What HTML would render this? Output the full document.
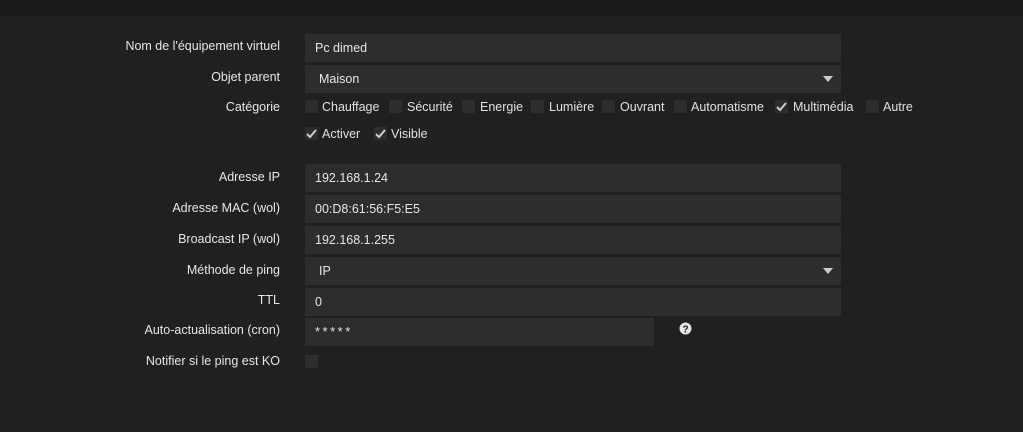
<!DOCTYPE html><html><head><style>
body{margin:0;width:1023px;height:432px;background:#202020;font-family:"Liberation Sans",sans-serif;font-size:12.5px;color:#ddd;position:relative;overflow:hidden}
.top{position:absolute;left:0;top:0;width:1023px;height:16px;background:#191919}
.l{position:absolute;right:743px;color:#e6e6e6;white-space:nowrap}
.i{position:absolute;left:305px;width:536px;height:28px;background:#2d2d2d;color:#e6e6e6;box-sizing:border-box;padding-left:10px;line-height:28px}
.cb{position:absolute;width:13px;height:13px;background:#2d2d2d}
.t{position:absolute;white-space:nowrap;color:#e0e0e0}
.ar{position:absolute;right:8px;top:11px;width:0;height:0;border-left:5px solid transparent;border-right:5px solid transparent;border-top:6px solid #ccc}
svg{position:absolute}
</style></head><body>
<div class="top"></div>
<div class="l" style="top:39px">Nom de l'équipement virtuel</div>
<div class="i" style="top:34px">Pc dimed</div>
<div class="l" style="top:70px">Objet parent</div>
<div class="i" style="top:65px;padding-left:14px">Maison<div class="ar"></div></div>
<div class="l" style="top:100px">Catégorie</div>
<div class="cb" style="left:305px;top:100px"></div><div class="t" style="left:322px;top:100px">Chauffage</div>
<div class="cb" style="left:389px;top:100px"></div><div class="t" style="left:407px;top:100px">Sécurité</div>
<div class="cb" style="left:462px;top:100px"></div><div class="t" style="left:480px;top:100px">Energie</div>
<div class="cb" style="left:531px;top:100px"></div><div class="t" style="left:549px;top:100px">Lumière</div>
<div class="cb" style="left:602px;top:100px"></div><div class="t" style="left:620px;top:100px">Ouvrant</div>
<div class="cb" style="left:674px;top:100px"></div><div class="t" style="left:691px;top:100px">Automatisme</div>
<div class="cb" style="left:775px;top:100px"></div><svg style="left:775px;top:100px" width="13" height="13"><path d="M2 7l3 3 6-7" stroke="#ccc" stroke-width="2" fill="none"/></svg><div class="t" style="left:793px;top:100px">Multimédia</div>
<div class="cb" style="left:866px;top:100px"></div><div class="t" style="left:883px;top:100px">Autre</div>
<div class="cb" style="left:305px;top:127px"></div><svg style="left:305px;top:127px" width="13" height="13"><path d="M2 7l3 3 6-7" stroke="#ccc" stroke-width="2" fill="none"/></svg><div class="t" style="left:322px;top:127px">Activer</div>
<div class="cb" style="left:374px;top:127px"></div><svg style="left:374px;top:127px" width="13" height="13"><path d="M2 7l3 3 6-7" stroke="#ccc" stroke-width="2" fill="none"/></svg><div class="t" style="left:391px;top:127px">Visible</div>
<div class="l" style="top:170px">Adresse IP</div><div class="i" style="top:164px">192.168.1.24</div>
<div class="l" style="top:201px">Adresse MAC (wol)</div><div class="i" style="top:195px">00:D8:61:56:F5:E5</div>
<div class="l" style="top:232px">Broadcast IP (wol)</div><div class="i" style="top:226px">192.168.1.255</div>
<div class="l" style="top:263px">Méthode de ping</div><div class="i" style="top:257px;padding-left:14px">IP<div class="ar"></div></div>
<div class="l" style="top:293px">TTL</div><div class="i" style="top:288px">0</div>
<div class="l" style="top:323px">Auto-actualisation (cron)</div><div class="i" style="top:318px;width:349px;letter-spacing:2.5px;font-size:13px">*****</div>
<svg style="left:679px;top:322px" width="13" height="13"><circle cx="6.5" cy="6.5" r="6" fill="#e6e6e6"/><text x="6.5" y="10.5" text-anchor="middle" font-size="10" font-weight="bold" fill="#202020" font-family="Liberation Sans">?</text></svg>
<div class="l" style="top:354px">Notifier si le ping est KO</div>
<div class="cb" style="left:305px;top:355px"></div>
</body></html>
